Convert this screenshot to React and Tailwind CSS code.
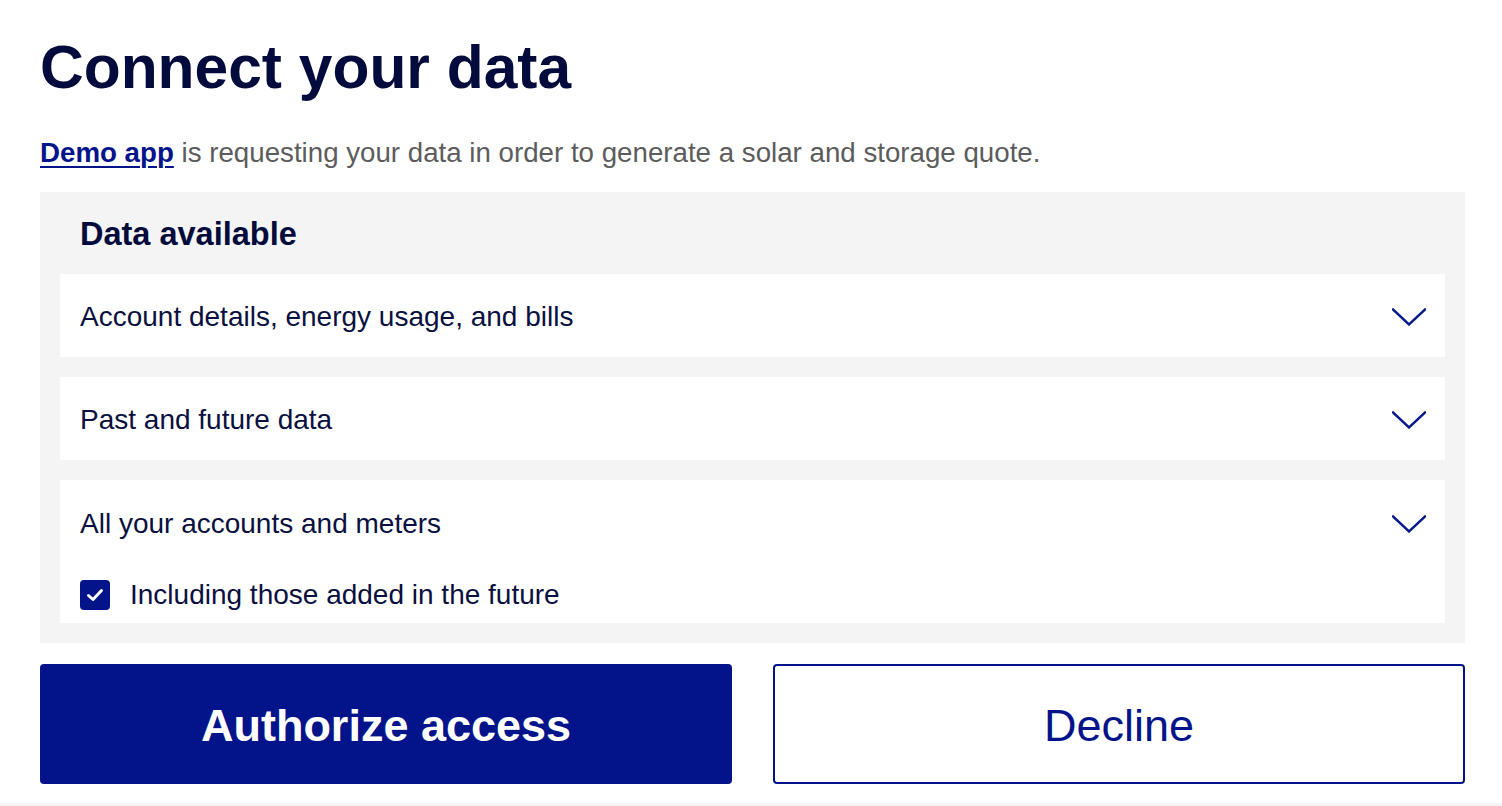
import React from 'react'

const rows = [
  { id: 'details', label: 'Account details, energy usage, and bills' },
  { id: 'range', label: 'Past and future data' },
]

function Chevron() {
  return (
    <svg width="34" height="18" viewBox="0 0 34 18" fill="none" className="flex-shrink-0">
      <path d="M1 1.5 L17 16.5 L33 1.5" stroke="#0a1a8a" strokeWidth="2.4" strokeLinecap="square" />
    </svg>
  )
}

function Checkbox() {
  return (
    <div className="w-[30px] h-[30px] rounded-[4px] bg-[#03148a] flex items-center justify-center flex-shrink-0">
      <svg width="18" height="14" viewBox="0 0 18 14" fill="none">
        <path d="M2.5 7.5 L7 11.5 L15.5 2.5" stroke="#ffffff" strokeWidth="3" strokeLinecap="round" strokeLinejoin="round" />
      </svg>
    </div>
  )
}

export default function App() {
  return (
    <div className="min-h-[806px] bg-white font-['Liberation_Sans',Arial,sans-serif] overflow-hidden">
      <div className="w-[1425px] ml-[40px] pt-[31px]">
        <h1 className="text-[60.5px] leading-[72px] font-bold text-[#020b3b]">Connect your data</h1>

        <p className="mt-[32px] text-[27.7px] leading-[36px] text-[#5c5c5c]">
          <a href="#" className="font-bold text-[#03148a] underline underline-offset-[4px] decoration-[2px]">Demo app</a>
          {' '}is requesting your data in order to generate a solar and storage quote.
        </p>

        {/* data panel */}
        <div className="mt-[21px] bg-[#f4f4f4] px-[20px] pt-[22px] pb-[20px]">
          <h2 className="pl-[20px] text-[32.5px] leading-[40px] font-bold text-[#020b3b]">Data available</h2>

          <div className="mt-[20px] flex flex-col gap-[20px]">
            {rows.map((r) => (
              <div key={r.id} className="bg-white h-[83px] pl-[20px] pr-[19px] pt-[3px] flex items-center justify-between">
                <span className="text-[28px] leading-[36px] text-[#0a1040]">{r.label}</span>
                <Chevron />
              </div>
            ))}

            <div className="bg-white pl-[20px] pr-[19px] pt-[26px] pb-[10px]">
              <div className="flex items-center justify-between">
                <span className="text-[28px] leading-[36px] text-[#0a1040]">All your accounts and meters</span>
                <Chevron />
              </div>
              <label className="mt-[35px] flex items-center gap-[20px]">
                <Checkbox />
                <span className="text-[28px] leading-[36px] text-[#0a1040]">Including those added in the future</span>
              </label>
            </div>
          </div>
        </div>

        {/* actions */}
        <div className="mt-[21px] grid grid-cols-2 gap-[41px]">
          <button className="h-[120px] pt-[4px] rounded-[4px] bg-[#03148a] text-white text-[45px] font-bold">
            Authorize access
          </button>
          <button className="h-[120px] pt-[4px] rounded-[4px] border-[2px] border-[#03148a] bg-white text-[#03148a] text-[45px]">
            Decline
          </button>
        </div>
      </div>
      <div className="mt-[19px] h-[10px] bg-[#f3f3f3]" />
    </div>
  )
}
